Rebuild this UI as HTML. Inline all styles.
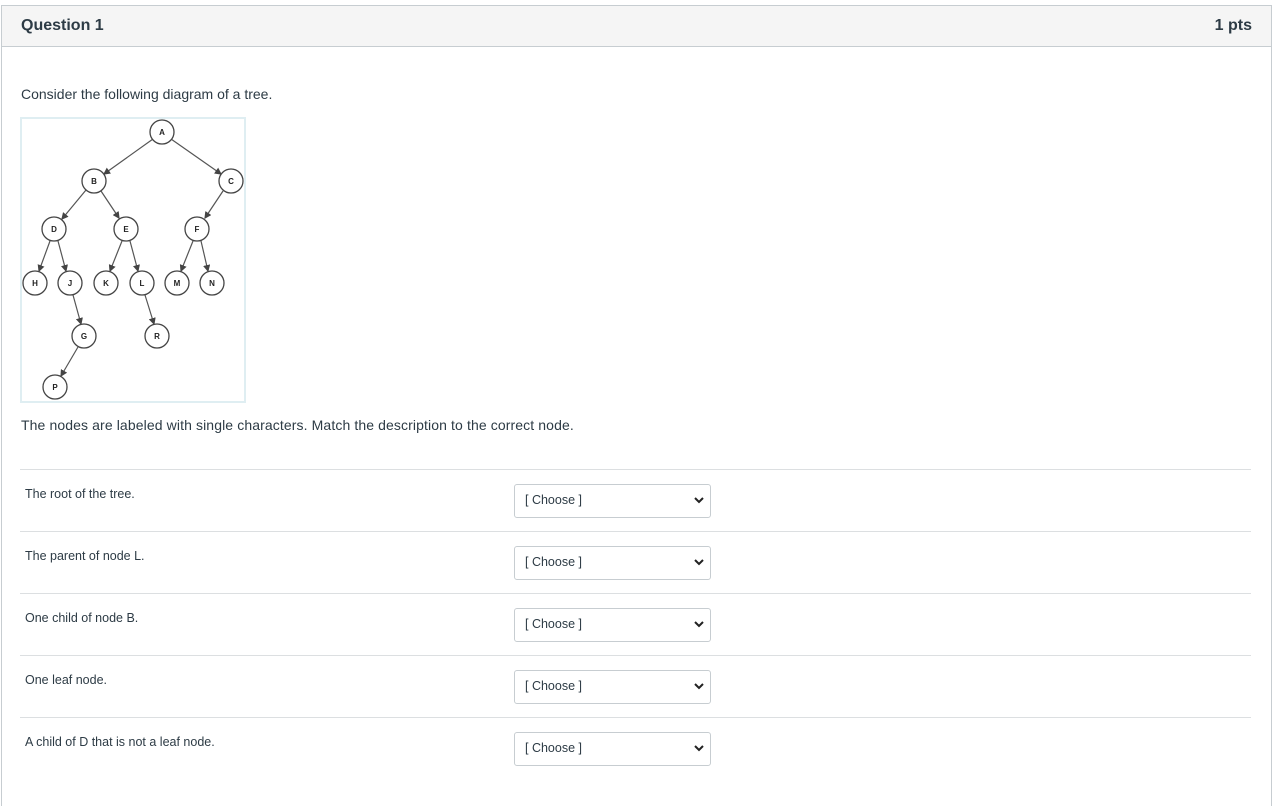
<!DOCTYPE html>
<html><head><style>
body{margin:0;background:#fff;font-family:"Liberation Sans",sans-serif;color:#2d3b45;}
.q{position:absolute;left:1px;top:5px;width:1269px;height:800px;border:1px solid #c7cdd1;border-bottom:none;}
.hd{height:40px;background:#f5f5f5;border-bottom:1px solid #c7cdd1;position:relative;}
.hd b{position:absolute;left:19px;top:11px;font-size:16px;color:#2d3b45;}
.hd .p{right:19px;left:auto;}
.t{position:absolute;font-size:14px;}
.row{position:absolute;left:20px;width:1231px;height:62px;border-top:1px solid #dcdfe1;}
.row span{position:absolute;left:5px;top:17px;font-size:12.5px;}
.sel{position:absolute;left:494px;width:195px;height:32px;border:1px solid #c7cdd1;border-radius:3px;background:#fff;}
.sel i{position:absolute;left:10px;top:8px;font-style:normal;font-size:12.5px;color:#2d3b45;}
.sel svg{position:absolute;right:6px;top:12px;}
</style></head><body>
<div class="q">
<div class="hd"><b>Question 1</b><b class="p">1 pts</b></div>
</div>
<div class="t" style="left:21px;top:86px">Consider the following diagram of a tree.</div>
<svg style="position:absolute;left:20px;top:117px" width="227" height="287" viewBox="20 117 227 287">
<defs><marker id="a" markerWidth="6" markerHeight="6" refX="5" refY="3" orient="auto"><path d="M0 0L6 3L0 6z" fill="#444"/></marker></defs>
<rect x="21" y="118" width="224" height="284" fill="#fff" stroke="#dfeef2" stroke-width="2"/>
<g stroke="#555" stroke-width="1.2" fill="none" marker-end="url(#a)">
<line x1="153" y1="139" x2="104" y2="174"/><line x1="171" y1="139" x2="221" y2="174"/>
<line x1="86" y1="190" x2="62" y2="219"/><line x1="101" y1="191" x2="119" y2="218"/>
<line x1="223" y1="191" x2="205" y2="218"/>
<line x1="50" y1="241" x2="39" y2="271"/><line x1="58" y1="241" x2="66" y2="271"/>
<line x1="122" y1="241" x2="110" y2="271"/><line x1="130" y1="241" x2="138" y2="271"/>
<line x1="193" y1="241" x2="181" y2="271"/><line x1="201" y1="241" x2="208" y2="271"/>
<line x1="73" y1="295" x2="81" y2="324"/><line x1="145" y1="295" x2="154" y2="324"/>
<line x1="78" y1="347" x2="61" y2="376"/>
</g>
<g fill="#fff" stroke="#444" stroke-width="1.3">
<circle cx="162" cy="132" r="12"/><circle cx="94" cy="181" r="12"/><circle cx="231" cy="181" r="12"/>
<circle cx="54" cy="229" r="12"/><circle cx="126" cy="229" r="12"/><circle cx="197" cy="229" r="12"/>
<circle cx="35" cy="283" r="12"/><circle cx="70" cy="283" r="12"/><circle cx="106" cy="283" r="12"/><circle cx="142" cy="283" r="12"/><circle cx="177" cy="283" r="12"/><circle cx="212" cy="283" r="12"/>
<circle cx="84" cy="336" r="12"/><circle cx="157" cy="336" r="12"/><circle cx="55" cy="387" r="12"/>
</g>
<g fill="#222" font-size="8" font-weight="bold" text-anchor="middle" font-family="Liberation Sans">
<text x="162" y="135">A</text><text x="94" y="184">B</text><text x="231" y="184">C</text>
<text x="54" y="232">D</text><text x="126" y="232">E</text><text x="197" y="232">F</text>
<text x="35" y="286">H</text><text x="70" y="286">J</text><text x="106" y="286">K</text><text x="142" y="286">L</text><text x="177" y="286">M</text><text x="212" y="286">N</text>
<text x="84" y="339">G</text><text x="157" y="339">R</text><text x="55" y="390">P</text>
</g>
</svg>
<div class="t" style="left:21px;top:417px;letter-spacing:0.11px">The nodes are labeled with single characters. Match the description to the correct node.</div>
<div class="row" style="top:469px"><span>The root of the tree.</span><div class="sel" style="top:14px"><i>[ Choose ]</i><svg width="10" height="7"><path d="M1 1L5 5L9 1" stroke="#222" stroke-width="2" fill="none"/></svg></div></div>
<div class="row" style="top:531px"><span>The parent of node L.</span><div class="sel" style="top:14px"><i>[ Choose ]</i><svg width="10" height="7"><path d="M1 1L5 5L9 1" stroke="#222" stroke-width="2" fill="none"/></svg></div></div>
<div class="row" style="top:593px"><span>One child of node B.</span><div class="sel" style="top:14px"><i>[ Choose ]</i><svg width="10" height="7"><path d="M1 1L5 5L9 1" stroke="#222" stroke-width="2" fill="none"/></svg></div></div>
<div class="row" style="top:655px"><span>One leaf node.</span><div class="sel" style="top:14px"><i>[ Choose ]</i><svg width="10" height="7"><path d="M1 1L5 5L9 1" stroke="#222" stroke-width="2" fill="none"/></svg></div></div>
<div class="row" style="top:717px"><span>A child of D that is not a leaf node.</span><div class="sel" style="top:14px"><i>[ Choose ]</i><svg width="10" height="7"><path d="M1 1L5 5L9 1" stroke="#222" stroke-width="2" fill="none"/></svg></div></div>
</body></html>
